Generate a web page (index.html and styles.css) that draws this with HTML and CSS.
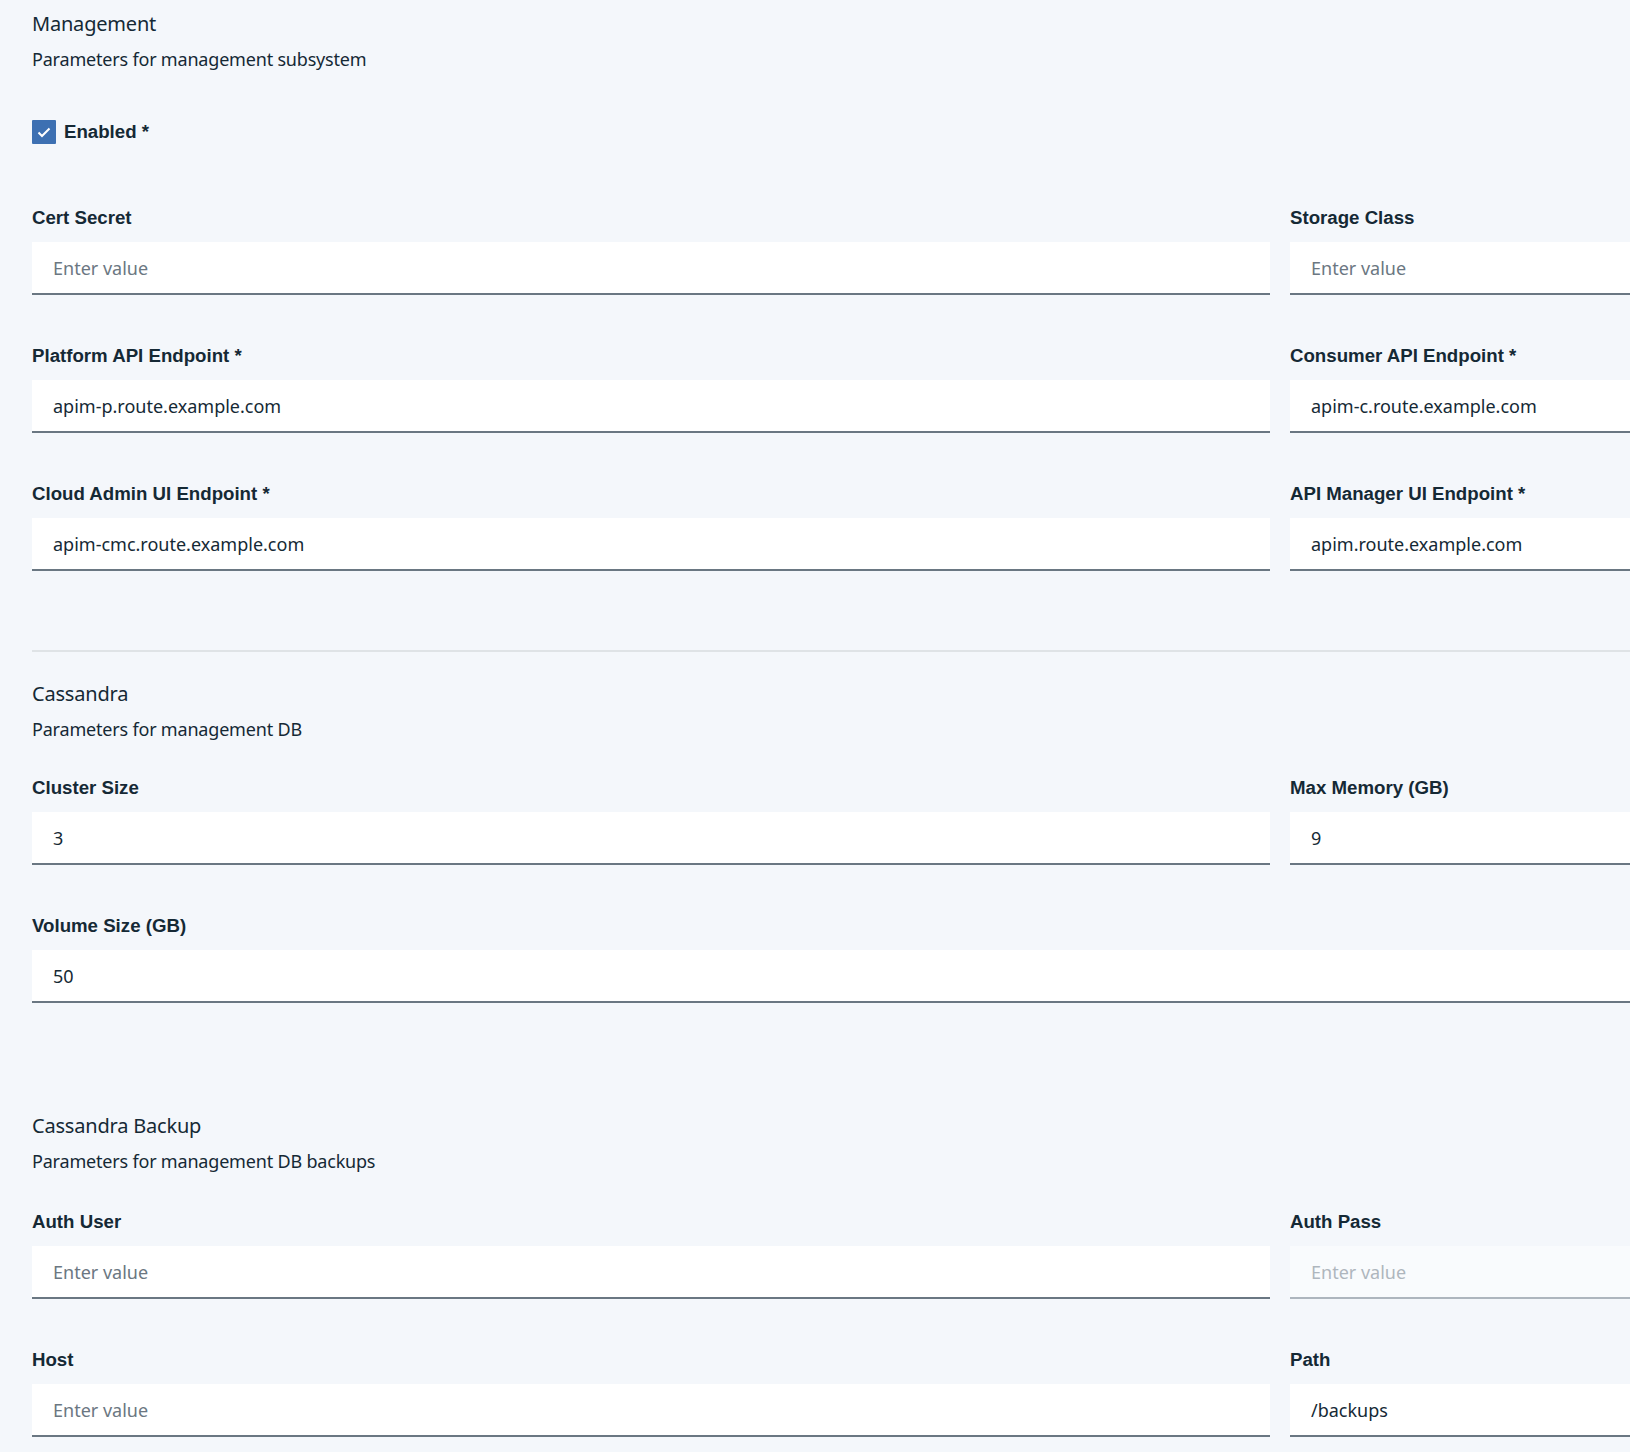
FILE: index.html
```html
<!DOCTYPE html>
<html lang="en">
<head>
<meta charset="utf-8">
<title>Management parameters</title>
<link rel="stylesheet" href="styles.css">
</head>
<body>
<main class="page">
  <section class="section section-management">
    <h2 class="section-title">Management</h2>
    <p class="section-desc">Parameters for management subsystem</p>
    <label class="checkbox">
      <span class="checkbox-box">
        <svg viewBox="0 0 24 24" width="24" height="24" aria-hidden="true"><path d="M6.5 12.5 L10 16 L17.5 8.5" fill="none" stroke="#fff" stroke-width="2"/></svg>
      </span>
      <span class="checkbox-label">Enabled *</span>
    </label>
    <div class="form-grid grid-management">
      <div class="field">
        <label class="field-label">Cert Secret</label>
        <input class="text-input" type="text" placeholder="Enter value">
      </div>
      <div class="field">
        <label class="field-label">Storage Class</label>
        <input class="text-input" type="text" placeholder="Enter value">
      </div>
      <div class="field">
        <label class="field-label">Platform API Endpoint *</label>
        <input class="text-input" type="text" value="apim-p.route.example.com">
      </div>
      <div class="field">
        <label class="field-label">Consumer API Endpoint *</label>
        <input class="text-input" type="text" value="apim-c.route.example.com">
      </div>
      <div class="field">
        <label class="field-label">Cloud Admin UI Endpoint *</label>
        <input class="text-input" type="text" value="apim-cmc.route.example.com">
      </div>
      <div class="field">
        <label class="field-label">API Manager UI Endpoint *</label>
        <input class="text-input" type="text" value="apim.route.example.com">
      </div>
    </div>
  </section>

  <hr class="divider">

  <section class="section section-cassandra">
    <h2 class="section-title">Cassandra</h2>
    <p class="section-desc">Parameters for management DB</p>
    <div class="form-grid grid-cassandra">
      <div class="field">
        <label class="field-label">Cluster Size</label>
        <input class="text-input" type="text" value="3">
      </div>
      <div class="field">
        <label class="field-label">Max Memory (GB)</label>
        <input class="text-input" type="text" value="9">
      </div>
      <div class="field field-wide">
        <label class="field-label">Volume Size (GB)</label>
        <input class="text-input" type="text" value="50">
      </div>
    </div>
  </section>

  <section class="section section-backup">
    <h2 class="section-title">Cassandra Backup</h2>
    <p class="section-desc">Parameters for management DB backups</p>
    <div class="form-grid grid-backup">
      <div class="field">
        <label class="field-label">Auth User</label>
        <input class="text-input" type="text" placeholder="Enter value">
      </div>
      <div class="field">
        <label class="field-label">Auth Pass</label>
        <input class="text-input" type="password" placeholder="Enter value" disabled>
      </div>
      <div class="field">
        <label class="field-label">Host</label>
        <input class="text-input" type="text" placeholder="Enter value">
      </div>
      <div class="field">
        <label class="field-label">Path</label>
        <input class="text-input" type="text" value="/backups">
      </div>
    </div>
  </section>
</main>
</body>
</html>
```

FILE: styles.css
```css
html, body {
  margin: 0;
  padding: 0;
  overflow: hidden;
  background: #f4f7fb;
}

body {
  font-family: "Noto Sans", "Open Sans", sans-serif;
  color: #152935;
}

.page {
  box-sizing: border-box;
  width: 100%;
  padding: 10px 0 0 32px;
}

.section-title {
  margin: 0;
  font-size: 20px;
  line-height: 28px;
  letter-spacing: -0.2px;
  font-weight: 400;
  color: #152935;
}

.section-desc {
  margin: 9px 0 0;
  font-size: 18px;
  line-height: 24px;
  letter-spacing: -0.19px;
  color: #152935;
}

.checkbox {
  margin-top: 49px;
  display: flex;
  align-items: center;
  gap: 8px;
  height: 24px;
}

.checkbox-box {
  width: 24px;
  height: 24px;
  background: #3d70b2;
  border-radius: 1px;
  display: block;
}

.checkbox-box svg {
  display: block;
}

.checkbox-label,
.field-label {
  font-family: "Liberation Sans", Arial, sans-serif;
  font-weight: 700;
  font-size: 18.67px;
  line-height: 24px;
  color: #152935;
}

.form-grid {
  display: grid;
  grid-template-columns: 1238px 1fr;
  column-gap: 20px;
  row-gap: 48px;
}

.grid-management { margin-top: 61px; }
.grid-cassandra { margin-top: 34px; }
.grid-backup { margin-top: 36px; }

.field {
  display: flex;
  flex-direction: column;
}

.field-wide {
  grid-column: 1 / -1;
}

.field-label {
  display: block;
  padding-top: 1px;
  margin-bottom: 12px;
}

.text-input {
  box-sizing: border-box;
  width: 100%;
  height: 53px;
  margin: 0;
  padding: 0 21px;
  border: 0;
  border-bottom: 2px solid #6a7782;
  border-radius: 0;
  background: #ffffff;
  font-family: "Noto Sans", "Open Sans", sans-serif;
  font-size: 18px;
  color: #152935;
  outline: none;
}

.text-input::placeholder {
  color: #6b7782;
  opacity: 1;
}

.text-input:disabled {
  opacity: 0.5;
}

.divider {
  margin: 79px 0 0;
  border: 0;
  height: 2px;
  background: #dfe3e6;
}

.section-cassandra { margin-top: 28px; }
.section-backup { margin-top: 109px; }
```
